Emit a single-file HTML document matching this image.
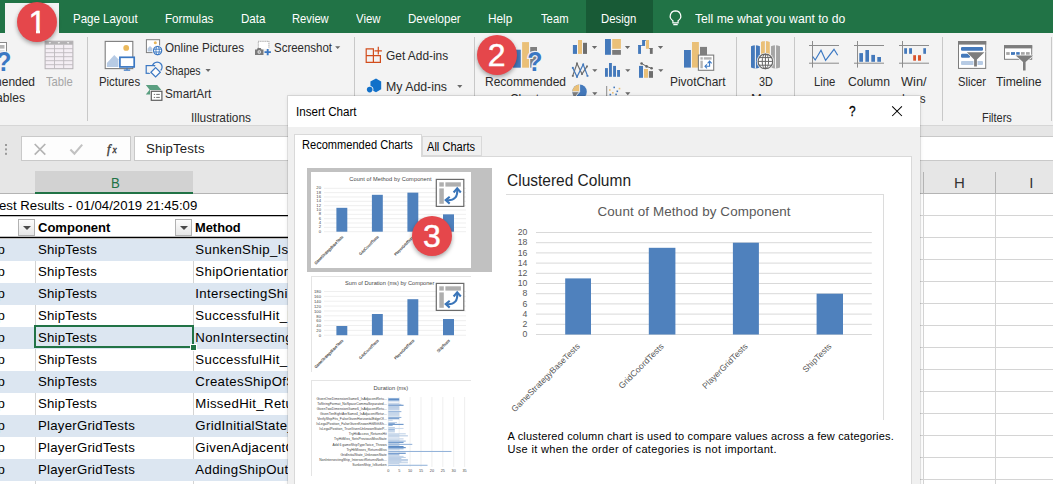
<!DOCTYPE html>
<html lang="en"><head><meta charset="utf-8"><title>Insert Chart - Recommended Charts</title>
<style>
html,body{margin:0;padding:0}
body{width:1053px;height:484px;overflow:hidden;position:relative;background:#fff;font-family:"Liberation Sans",sans-serif}
.t{position:absolute;white-space:nowrap;line-height:1}
.a{position:absolute}
.sep{position:absolute;top:37px;width:1px;height:84px;background:#c8c8c8}
.fbtn{position:absolute;top:219px;width:17px;height:17px;box-sizing:border-box;border:1px solid #b2b2b2;background:linear-gradient(#fdfdfd,#e6e6e6)}
.fbtn:after{content:"";position:absolute;left:3.6px;top:6px;border:4px solid transparent;border-top:4.2px solid #4a4a4a;border-bottom:none}
.circ{position:absolute;width:40px;height:40px;border-radius:50%;background:#e5474b;box-shadow:0 2px 4px rgba(0,0,0,.35)}
svg{position:absolute;left:0;top:0;overflow:visible}
</style></head><body>

<!-- ================= SHEET ================= -->
<div class="a" style="left:0;top:171px;width:1053px;height:22px;background:#e6e6e6"></div>
<div class="a" style="left:0;top:193px;width:1053px;height:1px;background:#b4b4b4"></div>
<div class="a" style="left:35px;top:171px;width:158px;height:21px;background:#d2d2d2"></div>
<div class="a" style="left:35px;top:192px;width:158px;height:2px;background:#217346"></div>
<div class="a" style="left:923px;top:194px;width:1px;height:290px;background:#d4d4d4"></div><div class="a" style="left:923px;top:172px;width:1px;height:21px;background:#b4b4b4"></div>
<div class="a" style="left:995px;top:194px;width:1px;height:290px;background:#d4d4d4"></div><div class="a" style="left:995px;top:172px;width:1px;height:21px;background:#b4b4b4"></div>
<div class="a" style="left:0;top:238.5px;width:300px;height:22px;background:#dce6f1"></div>
<div class="a" style="left:0;top:282.5px;width:300px;height:22px;background:#dce6f1"></div>
<div class="a" style="left:0;top:326.5px;width:300px;height:22px;background:#dce6f1"></div>
<div class="a" style="left:0;top:370.5px;width:300px;height:22px;background:#dce6f1"></div>
<div class="a" style="left:0;top:414.5px;width:300px;height:22px;background:#dce6f1"></div>
<div class="a" style="left:0;top:458.5px;width:300px;height:22px;background:#dce6f1"></div>
<div class="a" style="left:35px;top:260.5px;width:1px;height:22px;background:#d4d4d4"></div>
<div class="a" style="left:193px;top:260.5px;width:1px;height:22px;background:#d4d4d4"></div>
<div class="a" style="left:35px;top:304.5px;width:1px;height:22px;background:#d4d4d4"></div>
<div class="a" style="left:193px;top:304.5px;width:1px;height:22px;background:#d4d4d4"></div>
<div class="a" style="left:35px;top:348.5px;width:1px;height:22px;background:#d4d4d4"></div>
<div class="a" style="left:193px;top:348.5px;width:1px;height:22px;background:#d4d4d4"></div>
<div class="a" style="left:35px;top:392.5px;width:1px;height:22px;background:#d4d4d4"></div>
<div class="a" style="left:193px;top:392.5px;width:1px;height:22px;background:#d4d4d4"></div>
<div class="a" style="left:35px;top:436.5px;width:1px;height:22px;background:#d4d4d4"></div>
<div class="a" style="left:193px;top:436.5px;width:1px;height:22px;background:#d4d4d4"></div>
<div class="a" style="left:35px;top:480.5px;width:1px;height:22px;background:#d4d4d4"></div>
<div class="a" style="left:193px;top:480.5px;width:1px;height:22px;background:#d4d4d4"></div>
<div class="a" style="left:920px;top:215px;width:133px;height:1px;background:#d4d4d4"></div>
<div class="a" style="left:920px;top:237px;width:133px;height:1px;background:#d4d4d4"></div>
<div class="a" style="left:920px;top:259px;width:133px;height:1px;background:#d4d4d4"></div>
<div class="a" style="left:920px;top:281px;width:133px;height:1px;background:#d4d4d4"></div>
<div class="a" style="left:920px;top:303px;width:133px;height:1px;background:#d4d4d4"></div>
<div class="a" style="left:920px;top:325px;width:133px;height:1px;background:#d4d4d4"></div>
<div class="a" style="left:920px;top:347px;width:133px;height:1px;background:#d4d4d4"></div>
<div class="a" style="left:920px;top:369px;width:133px;height:1px;background:#d4d4d4"></div>
<div class="a" style="left:920px;top:391px;width:133px;height:1px;background:#d4d4d4"></div>
<div class="a" style="left:920px;top:413px;width:133px;height:1px;background:#d4d4d4"></div>
<div class="a" style="left:920px;top:435px;width:133px;height:1px;background:#d4d4d4"></div>
<div class="a" style="left:920px;top:457px;width:133px;height:1px;background:#d4d4d4"></div>
<div class="a" style="left:920px;top:479px;width:133px;height:1px;background:#d4d4d4"></div>
<div class="a" style="left:920px;top:501px;width:133px;height:1px;background:#d4d4d4"></div>

<svg width="1053" height="484" viewBox="0 0 1053 484"><path d="M0 215.7H300M0 237.5H300" stroke="#000" stroke-width="1.3" fill="none"/></svg>


<div class="fbtn" style="left:18px"></div>
<div class="fbtn" style="left:175px"></div>
<div class="a" style="left:34px;top:325px;width:160px;height:23px;box-sizing:border-box;border:2px solid #217346"></div>
<div class="a" style="left:190px;top:344px;width:5px;height:5px;background:#217346;border:1px solid #fff"></div>
<span class="t" style="left:110.50px;top:175.13px;font-size:15.2px;color:#217346;transform:scaleX(0.8678);transform-origin:0 0;">B</span>
<span class="t" style="left:953.98px;top:175.30px;font-size:15px;color:#333;">H</span>
<span class="t" style="left:1029.31px;top:175.30px;font-size:15px;color:#333;">I</span>
<span class="t" style="left:-1.00px;top:198.63px;font-size:13.2px;color:#000;letter-spacing:0.011px;">est Results - 01/04/2019 21:45:09</span>
<span class="t" style="left:38.20px;top:220.63px;font-size:13.2px;color:#000;font-weight:700;transform:scaleX(0.9882);transform-origin:0 0;">Component</span>
<span class="t" style="left:195.30px;top:220.63px;font-size:13.2px;color:#000;font-weight:700;transform:scaleX(0.9746);transform-origin:0 0;">Method</span>
<span class="t" style="left:-2.40px;top:242.63px;font-size:13.2px;color:#000;">p</span>
<span class="t" style="left:38.00px;top:242.63px;font-size:13.2px;color:#000;letter-spacing:0.201px;">ShipTests</span>
<span class="t" style="left:195.30px;top:242.63px;font-size:13.2px;color:#000;letter-spacing:0.35px;">SunkenShip_IsSunken</span>
<span class="t" style="left:-2.40px;top:264.63px;font-size:13.2px;color:#000;">p</span>
<span class="t" style="left:38.00px;top:264.63px;font-size:13.2px;color:#000;letter-spacing:0.201px;">ShipTests</span>
<span class="t" style="left:195.30px;top:264.63px;font-size:13.2px;color:#000;letter-spacing:0.35px;">ShipOrientation_Test</span>
<span class="t" style="left:-2.40px;top:286.63px;font-size:13.2px;color:#000;">p</span>
<span class="t" style="left:38.00px;top:286.63px;font-size:13.2px;color:#000;letter-spacing:0.201px;">ShipTests</span>
<span class="t" style="left:195.30px;top:286.63px;font-size:13.2px;color:#000;letter-spacing:0.35px;">IntersectingShips_Return</span>
<span class="t" style="left:-2.40px;top:308.63px;font-size:13.2px;color:#000;">p</span>
<span class="t" style="left:38.00px;top:308.63px;font-size:13.2px;color:#000;letter-spacing:0.201px;">ShipTests</span>
<span class="t" style="left:195.30px;top:308.63px;font-size:13.2px;color:#000;letter-spacing:0.35px;">SuccessfulHit_ReturnsHit</span>
<span class="t" style="left:-2.40px;top:330.63px;font-size:13.2px;color:#000;">p</span>
<span class="t" style="left:38.00px;top:330.63px;font-size:13.2px;color:#000;letter-spacing:0.201px;">ShipTests</span>
<span class="t" style="left:195.30px;top:330.63px;font-size:13.2px;color:#000;letter-spacing:0.35px;">NonIntersectingShip_Int</span>
<span class="t" style="left:-2.40px;top:352.63px;font-size:13.2px;color:#000;">p</span>
<span class="t" style="left:38.00px;top:352.63px;font-size:13.2px;color:#000;letter-spacing:0.201px;">ShipTests</span>
<span class="t" style="left:195.30px;top:352.63px;font-size:13.2px;color:#000;letter-spacing:0.35px;">SuccessfulHit_SinksShip</span>
<span class="t" style="left:-2.40px;top:374.63px;font-size:13.2px;color:#000;">p</span>
<span class="t" style="left:38.00px;top:374.63px;font-size:13.2px;color:#000;letter-spacing:0.201px;">ShipTests</span>
<span class="t" style="left:195.30px;top:374.63px;font-size:13.2px;color:#000;letter-spacing:0.35px;">CreatesShipOfSize_Test</span>
<span class="t" style="left:-2.40px;top:396.63px;font-size:13.2px;color:#000;">p</span>
<span class="t" style="left:38.00px;top:396.63px;font-size:13.2px;color:#000;letter-spacing:0.201px;">ShipTests</span>
<span class="t" style="left:195.30px;top:396.63px;font-size:13.2px;color:#000;letter-spacing:0.35px;">MissedHit_ReturnsMiss</span>
<span class="t" style="left:-2.40px;top:418.63px;font-size:13.2px;color:#000;">p</span>
<span class="t" style="left:38.00px;top:418.63px;font-size:13.2px;color:#000;letter-spacing:0.261px;">PlayerGridTests</span>
<span class="t" style="left:195.30px;top:418.63px;font-size:13.2px;color:#000;letter-spacing:0.35px;">GridInitialState_Unknown</span>
<span class="t" style="left:-2.40px;top:440.63px;font-size:13.2px;color:#000;">p</span>
<span class="t" style="left:38.00px;top:440.63px;font-size:13.2px;color:#000;letter-spacing:0.261px;">PlayerGridTests</span>
<span class="t" style="left:195.30px;top:440.63px;font-size:13.2px;color:#000;letter-spacing:0.35px;">GivenAdjacentCells_Is</span>
<span class="t" style="left:-2.40px;top:462.63px;font-size:13.2px;color:#000;">p</span>
<span class="t" style="left:38.00px;top:462.63px;font-size:13.2px;color:#000;letter-spacing:0.261px;">PlayerGridTests</span>
<span class="t" style="left:195.30px;top:462.63px;font-size:13.2px;color:#000;letter-spacing:0.35px;">AddingShipOutOfBounds</span>

<!-- ================= FORMULA BAR ================= -->
<div class="a" style="left:0;top:125px;width:1053px;height:46px;background:#e6e6e6"></div>
<div class="a" style="left:5px;top:144px;width:2px;height:2px;background:#9a9a9a;box-shadow:0 4.4px 0 #9a9a9a,0 8.8px 0 #9a9a9a"></div>
<div class="a" style="left:21px;top:136px;width:110px;height:25px;box-sizing:border-box;background:#fdfdfd;border:1px solid #c9c9c9"></div>
<div class="a" style="left:134px;top:136px;width:930px;height:25px;box-sizing:border-box;background:#fff;border:1px solid #c9c9c9"></div>
<svg width="1053" height="484" viewBox="0 0 1053 484">
 <path d="M34.7 144 l10.6 10.6 M45.3 144 l-10.6 10.6" stroke="#b4b4b4" stroke-width="1.7" fill="none"/>
 <path d="M70.4 149.6 l4 4 l7.8 -9" stroke="#c2c2c2" stroke-width="2.1" fill="none"/>
</svg>
<span class="t" style="left:107px;top:142.6px;font-family:'Liberation Serif',serif;font-style:italic;font-size:12.5px;color:#3c3c3c;-webkit-text-stroke:0.4px #3c3c3c">f</span><span class="t" style="left:112.6px;top:146.3px;font-family:'Liberation Serif',serif;font-style:italic;font-size:9.5px;color:#3c3c3c;-webkit-text-stroke:0.35px #3c3c3c">x</span>
<span class="t" style="left:146.00px;top:142.43px;font-size:13.2px;color:#222;letter-spacing:0.168px;">ShipTests</span>

<!-- ================= RIBBON ================= -->
<div class="a" style="left:0;top:33px;width:1053px;height:92px;background:#f3f3f3"></div>
<div class="a" style="left:0;top:124.5px;width:1053px;height:1px;background:#d6d6d6"></div>
<div class="sep" style="left:87px"></div><div class="sep" style="left:354px"></div><div class="sep" style="left:474px"></div>
<div class="sep" style="left:736px"></div><div class="sep" style="left:794px"></div><div class="sep" style="left:942px"></div><div class="sep" style="left:1051px"></div>
<svg width="1053" height="484" viewBox="0 0 1053 484" font-family="Liberation Sans, sans-serif">
<defs>
 <clipPath id="ribclip"><rect x="0" y="33" width="1053" height="92"/></clipPath>
</defs>
<g clip-path="url(#ribclip)">
<!-- Recommended PivotTables (left, mostly cut) -->
<rect x="-8" y="42.5" width="14.5" height="13" fill="#fff" stroke="#8a8a8a" stroke-width="1"/>
<rect x="-6" y="45" width="10.5" height="3.6" fill="#b5b5b5"/>
<rect x="-6" y="50.5" width="10.5" height="1" fill="#c8c8c8"/><rect x="-6" y="53.5" width="10.5" height="1" fill="#c8c8c8"/>
<text x="-3.8" y="70.9" font-size="27" font-weight="700" fill="#3b78c3" stroke="#f3f3f3" stroke-width="2.2" paint-order="stroke" textLength="15.2" lengthAdjust="spacingAndGlyphs">?</text>
<!-- Table (disabled) -->
<g>
 <rect x="45.1" y="41.2" width="27.8" height="27.5" fill="#f4eef4" stroke="#b4b1b4" stroke-width="1"/>
 <rect x="45.1" y="41.2" width="27.8" height="3.5" fill="#b3b1b3"/>
 <path d="M45.1 48.7h27.8M45.1 52.7h27.8M45.1 56.7h27.8M45.1 60.7h27.8M45.1 64.7h27.8M54.5 44.7v24M63.7 44.7v24" stroke="#bdb9bd" stroke-width="0.9" fill="none"/>
 <path d="M48.6 42.2h2.6l-1.3 1.6zM57.6 42.2h2.6l-1.3 1.6zM66.8 42.2h2.6l-1.3 1.6z" fill="#fff"/>
</g>
<!-- Pictures -->
<g>
 <rect x="105.2" y="41.4" width="27.6" height="27.2" fill="#fff" stroke="#7d7d7d" stroke-width="1.1"/>
 <circle cx="126.2" cy="47.9" r="2.9" fill="#eab85b"/>
 <path d="M106.9 66.9 L106.9 63 L114.3 55 L118.4 59.2 L118.4 66.9 Z" fill="#b7cbe4"/>
 <rect x="119.9" y="57.3" width="14.3" height="9.6" fill="#fff" stroke="#3b78c3" stroke-width="1.7"/>
 <path d="M127 67.7v2 M123.8 70.1h6.4" stroke="#3b78c3" stroke-width="1.1" fill="none"/>
</g>
<!-- Online Pictures -->
<g>
 <rect x="146.4" y="39.7" width="13.2" height="12.9" fill="#fff" stroke="#7d7d7d" stroke-width="1"/>
 <circle cx="155.3" cy="42.8" r="1.5" fill="#eab85b"/>
 <path d="M147.6 51.4 L147.6 48.6 L150 46 L152.6 48.6 L152.6 51.4 Z" fill="#b7cbe4"/>
 <circle cx="157.6" cy="50.6" r="4.3" fill="#fff" stroke="#f3f3f3" stroke-width="2.4"/>
 <circle cx="157.6" cy="50.6" r="4.1" fill="#fff" stroke="#3b78c3" stroke-width="1.2"/>
 <ellipse cx="157.6" cy="50.6" rx="1.7" ry="4.1" fill="none" stroke="#3b78c3" stroke-width="0.9"/>
 <path d="M153.9 49.2h7.4M153.9 52h7.4" stroke="#3b78c3" stroke-width="0.9" fill="none"/>
</g>
<!-- Shapes -->
<g fill="none" stroke="#3b78c3" stroke-width="1.2">
 <circle cx="157.2" cy="67" r="4.9"/>
 <rect x="146.2" y="65.6" width="8.6" height="7.7" fill="#f3f3f3"/>
 <path d="M155.6 67.6 L160.3 72.2 L155.6 76.9 L150.9 72.2 Z" fill="#fdfdfd" stroke="#f3f3f3" stroke-width="3"/>
 <path d="M155.6 67.6 L160.3 72.2 L155.6 76.9 L150.9 72.2 Z" fill="#fdfdfd"/>
</g>
<path d="M205.5 69.1h5.2l-2.6 2.9z" fill="#6a6a6a"/>
<!-- SmartArt -->
<g>
 <path d="M145.8 85.1 H157.2 L161.2 89.8 L157.2 94.6 H145.8 L149.6 89.8 Z" fill="#5a9e80"/>
 <rect x="151.3" y="91.3" width="10.6" height="9" fill="#fff" stroke="#f3f3f3" stroke-width="2.6"/>
 <rect x="151.3" y="91.3" width="10.6" height="9" fill="#fff" stroke="#5f5f5f" stroke-width="1.2"/>
 <path d="M153.8 94.4h1.3M156.2 94.4h3.6M153.8 97.4h1.3M156.2 97.4h3.6" stroke="#6f6f6f" stroke-width="1" fill="none"/>
</g>
<!-- Screenshot -->
<g>
 <rect x="258.3" y="41.3" width="10.6" height="7.4" fill="#fff"/><path d="M258.3 47.6 V41.3 H268.9 V48" fill="none" stroke="#8a8a8a" stroke-width="1" stroke-dasharray="1 1.1"/>
 <path d="M255 49.4 h1.8 l0.9 -1.4 h3 l0.9 1.4 h1.9 v5.6 h-8.5 z" fill="#7a7a7a"/>
 <circle cx="259.2" cy="52" r="1.7" fill="#f3f3f3"/><circle cx="259.2" cy="52" r="0.8" fill="#7a7a7a"/>
 <path d="M267.7 48.9v6.4M264.5 52.1h6.4" stroke="#3b78c3" stroke-width="1.9" fill="none"/>
</g>
<path d="M335.1 46.2h5.2l-2.6 2.9z" fill="#6a6a6a"/>
<!-- Get Add-ins -->
<g fill="none" stroke="#d24d1c" stroke-width="1.2">
 <path d="M366.2 48.8 H373.4 V62.4 H366.2 Z M366.2 55.6 H380.4 V62.4 H373.4"/>
 <path d="M378.3 46.8v7.6M374.5 50.9h7.4"/>
</g>
<!-- My Add-ins -->
<g>
 <path d="M376 78.6 L381.2 81.6 L381.2 89.2 L376 92.3 L370.6 89.4 L370.4 81.6 Z" fill="#1170c9"/>
 <circle cx="369.7" cy="89.6" r="3.7" fill="#f3f3f3"/>
 <circle cx="369.7" cy="89.6" r="2.8" fill="#1170c9"/>
</g>
<path d="M457.2 85.1h5.2l-2.6 2.9z" fill="#6a6a6a"/>
<!-- Recommended Charts -->
<g>
 <rect x="513" y="49.7" width="7.8" height="18" fill="#4479bb"/>
 <rect x="522.1" y="42.1" width="6.9" height="25.6" fill="#eac078"/>
 <rect x="530.2" y="47" width="6.8" height="20.7" fill="#7f7f7f"/>
 <text x="527.3" y="70.9" font-size="27" font-weight="700" fill="#3b78c3" stroke="#f3f3f3" stroke-width="2.4" paint-order="stroke" textLength="15.2" lengthAdjust="spacingAndGlyphs">?</text>
</g>
<!-- chart gallery row 1 -->
<g>
 <rect x="572.9" y="45" width="4.1" height="8.9" fill="#4479bb"/><rect x="578" y="40" width="4" height="13.9" fill="#eac078"/><rect x="583" y="42.8" width="4" height="11.1" fill="#6e6e6e"/>
 <rect x="605" y="39" width="5.9" height="15.8" fill="#4479bb"/><rect x="612.2" y="39" width="8.7" height="9.8" fill="#eac078"/><rect x="612.2" y="50" width="8.7" height="4.8" fill="#7a7a7a"/>
 <rect x="638.1" y="45" width="2.9" height="8.9" fill="#4479bb"/><rect x="638.1" y="45" width="6.9" height="0.8" fill="#4479bb"/>
 <rect x="642.1" y="40" width="2.9" height="5.7" fill="#4479bb"/><rect x="645" y="40" width="1" height="0.8" fill="#4479bb"/>
 <rect x="645.9" y="40" width="3.1" height="8.8" fill="#eac078"/>
 <rect x="649" y="48.1" width="3.7" height="0.8" fill="#6e6e6e"/><rect x="649.9" y="48.1" width="2.8" height="5.8" fill="#6e6e6e"/>
</g>
<!-- row 2 -->
<g fill="none" stroke-width="1.2">
 <path d="M572.7 75.9 L577 63.5 L582 74 L587 66.4" stroke="#6e6e6e"/>
 <path d="M572.7 67.8 L577 76.8 L583.2 64.5 L587.5 75.9" stroke="#4479bb"/>
</g>
<g fill="#6e6e6e"><rect x="571.9" y="75" width="1.8" height="1.8"/><rect x="576.1" y="62.6" width="1.8" height="1.8"/><rect x="581.1" y="73.1" width="1.8" height="1.8"/><rect x="586.1" y="65.5" width="1.8" height="1.8"/></g>
<g fill="#4479bb"><rect x="571.9" y="66.9" width="1.8" height="1.8"/><rect x="576.1" y="75.9" width="1.8" height="1.8"/><rect x="582.3" y="63.6" width="1.8" height="1.8"/><rect x="586.6" y="75" width="1.8" height="1.8"/></g>
<g fill="#4479bb">
 <rect x="605" y="68.1" width="2.9" height="8.7"/><rect x="609" y="63" width="2.9" height="13.8"/><rect x="613.1" y="65.9" width="2.9" height="10.9"/><rect x="617.1" y="70" width="2.9" height="6.8"/>
</g>
<g>
 <rect x="639" y="65.9" width="4" height="11.9" fill="#4479bb"/><rect x="644" y="69" width="4" height="8.8" fill="#eac078"/><rect x="648.9" y="71.1" width="4.1" height="6.7" fill="#6e6e6e"/>
 <path d="M641.6 63.5 L646.6 66.4 L651.6 68.3" stroke="#666" stroke-width="1" fill="none"/>
 <circle cx="641.6" cy="63.5" r="1.3" fill="#666"/><circle cx="646.6" cy="66.4" r="1.3" fill="#666"/><circle cx="651.6" cy="68.3" r="1.3" fill="#666"/>
</g>
<!-- row 3 : pie & scatter -->
<g>
 <circle cx="579.6" cy="91.7" r="7.2" fill="#4479bb"/>
 <path d="M579.6 91.7 V84.5 A7.2 7.2 0 0 0 572.4 91.7 Z" fill="#eac078"/>
 <path d="M579.6 91.7 H572.4 A7.2 7.2 0 0 0 575 97.2 Z" fill="#7f7f7f"/>
 <path d="M579.6 84.2V91.7H572.2M579.6 91.7L574.8 97.5" stroke="#f3f3f3" stroke-width="0.9" fill="none"/>
 <path d="M606.7 86v14" stroke="#8a8a8a" stroke-width="1"/>
 <rect x="609" y="89.2" width="1.6" height="1.6" fill="#eac078"/><rect x="613.4" y="86.6" width="1.6" height="1.6" fill="#4479bb"/><rect x="612" y="92" width="1.6" height="1.6" fill="#eac078"/>
 <rect x="616.5" y="90.5" width="1.6" height="1.6" fill="#4479bb"/><rect x="618.7" y="87.8" width="1.6" height="1.6" fill="#eac078"/><rect x="609.5" y="93.8" width="1.6" height="1.6" fill="#4479bb"/><rect x="615.3" y="93.6" width="1.6" height="1.6" fill="#4479bb"/>
</g>
<g fill="#6a6a6a">
 <path d="M591.9 46h5.2l-2.6 2.9z"/><path d="M624.9 46h5.2l-2.6 2.9z"/><path d="M657.9 46h5.2l-2.6 2.9z"/>
 <path d="M592.2 69.2h5.2l-2.6 2.9z"/><path d="M625.2 69.2h5.2l-2.6 2.9z"/><path d="M658.2 69.2h5.2l-2.6 2.9z"/>
 <path d="M592.2 92.3h5.2l-2.6 2.9z"/><path d="M625.2 92.3h5.2l-2.6 2.9z"/>
</g>
<!-- PivotChart -->
<g>
 <rect x="684" y="50" width="6.9" height="17.6" fill="#4479bb"/><rect x="692" y="42" width="6.9" height="25.6" fill="#eac078"/><rect x="700" y="46.9" width="7" height="12" fill="#7f7f7f"/>
 <rect x="698.4" y="55.1" width="15.3" height="15.2" fill="#fff" stroke="#7d7d7d" stroke-width="1.1"/>
 <rect x="700.4" y="57.2" width="2.4" height="2.4" fill="#b3b3b3"/><rect x="703.8" y="57.2" width="7.8" height="2.4" fill="#b3b3b3"/><rect x="700.4" y="60.7" width="2.4" height="7.6" fill="#b3b3b3"/>
 <path d="M705.2 66.3 H709.6 V61.5" fill="none" stroke="#3b78c3" stroke-width="1.1"/>
 <path d="M707.6 63.3 L709.6 61.1 L711.6 63.3 M707 64.3 L705 66.3 L707 68.3" fill="none" stroke="#3b78c3" stroke-width="1.1"/>
</g>
<!-- 3D Map -->
<g>
 <path d="M751 46.3 Q755.4 44.2 759.9 46.3 V67.5 Q755.4 69.4 751 67.5 Z" fill="#4479bb"/>
 <path d="M755.4 45 V68.6" stroke="#f3f3f3" stroke-width="1.1"/>
 <path d="M761 42 Q765.4 40 769.8 42 V60 H761 Z" fill="#eac078"/>
 <path d="M765.4 40.8 V58" stroke="#f3f3f3" stroke-width="1.1"/>
 <path d="M771 46.3 Q775.5 44.2 780 46.3 V67.5 Q775.5 69.4 771 67.5 Z" fill="#a6a6a6"/>
 <path d="M775.5 45 V68.6" stroke="#f3f3f3" stroke-width="1.1"/>
 <circle cx="765.4" cy="61.4" r="8.6" fill="#f3f3f3"/>
 <circle cx="765.4" cy="61.4" r="7.3" fill="#fff" stroke="#666" stroke-width="1.2"/>
 <ellipse cx="765.4" cy="61.4" rx="3.2" ry="7.3" fill="none" stroke="#666" stroke-width="1"/>
 <path d="M765.4 54.1V68.7M758.1 61.4H772.7M759.2 57.6H771.6M759.2 65.2H771.6" stroke="#666" stroke-width="1" fill="none"/>
</g>
<!-- Sparklines -->
<g fill="none" stroke="#8c8c8c" stroke-width="1">
 <path d="M812.5 41v26.6M809 45.5h30M809 63.2h30"/>
 <path d="M857.5 41v26.6M854 45.5h30M854 63.2h30"/>
 <path d="M902.5 41v26.6M899 45.5h30M899 63.2h30"/>
</g>
<path d="M812.7 56.5 L815.2 60 L821 50.3 L825.6 60.4 L834 49.3 L837.7 55.2" fill="none" stroke="#3b78c3" stroke-width="1.2"/>
<g fill="#4479bb">
 <rect x="859.3" y="53.1" width="3.7" height="8.7"/><rect x="865.4" y="50" width="3.6" height="11.8"/><rect x="871.3" y="54.9" width="3.7" height="6.9"/><rect x="877.3" y="57" width="3.7" height="4.8"/>
 <rect x="904.2" y="48.2" width="2.8" height="5.6"/><rect x="909.1" y="48.2" width="2.9" height="5.6"/><rect x="923.3" y="48.2" width="2.7" height="5.6"/>
</g>
<rect x="913.2" y="55.2" width="2.8" height="5.5" fill="#d9532c"/><rect x="918" y="55.2" width="3" height="5.5" fill="#d9532c"/>
<!-- Slicer -->
<g>
 <rect x="958.5" y="41.5" width="27.2" height="26.9" fill="#fff" stroke="#7d7d7d" stroke-width="1"/>
 <rect x="958" y="41" width="28.2" height="3.6" fill="#7d7d7d"/>
 <rect x="961" y="46.9" width="22" height="3.8" rx="1.2" fill="#4479bb"/>
 <rect x="961" y="53.8" width="9" height="3.9" rx="1.2" fill="#4479bb"/>
 <rect x="961" y="61.1" width="22" height="3.8" rx="1" fill="#b7cbe4"/>
 <path d="M966.8 52.2 H984.4 L976.9 59.4 V66.4 H974.1 V59.4 Z" fill="#7d7d7d" stroke="#fff" stroke-width="1.3" paint-order="stroke"/>
</g>
<!-- Timeline -->
<g>
 <rect x="1004.5" y="45.7" width="27.2" height="13.6" fill="#fff" stroke="#7d7d7d" stroke-width="1"/>
 <rect x="1004" y="45.2" width="28.2" height="3.2" fill="#7d7d7d"/>
 <rect x="1006.2" y="52.1" width="3.5" height="2.8" fill="#a6a6a6"/><rect x="1011" y="52.1" width="4" height="2.8" fill="#4479bb"/><rect x="1016.2" y="52.1" width="3.5" height="2.8" fill="#4479bb"/>
 <rect x="1021" y="52.1" width="3.7" height="2.8" fill="#a6a6a6"/><rect x="1026" y="52.1" width="3.7" height="2.8" fill="#a6a6a6"/>
 <path d="M1015.7 55.5 H1033.2 L1025.6 62 V70.4 H1023 V62 Z" fill="#7d7d7d" stroke="#f8f8f8" stroke-width="1.3" paint-order="stroke"/>
</g>
</g>
</svg>

<span class="t" style="left:-46.40px;top:75.00px;font-size:13px;color:#2b2b2b;transform:scaleX(0.9188);transform-origin:0 0;">Recommended</span>
<span class="t" style="left:-37.00px;top:91.00px;font-size:13px;color:#2b2b2b;transform:scaleX(0.9325);transform-origin:0 0;">PivotTables</span>
<span class="t" style="left:45.90px;top:75.00px;font-size:13px;color:#a6a6a6;transform:scaleX(0.8623);transform-origin:0 0;">Table</span>
<span class="t" style="left:98.50px;top:75.00px;font-size:13px;color:#2b2b2b;transform:scaleX(0.8750);transform-origin:0 0;">Pictures</span>
<span class="t" style="left:165.40px;top:41.30px;font-size:13px;color:#2b2b2b;transform:scaleX(0.8961);transform-origin:0 0;">Online Pictures</span>
<span class="t" style="left:165.40px;top:63.60px;font-size:13px;color:#2b2b2b;transform:scaleX(0.8074);transform-origin:0 0;">Shapes</span>
<span class="t" style="left:165.40px;top:86.90px;font-size:13px;color:#2b2b2b;transform:scaleX(0.9045);transform-origin:0 0;">SmartArt</span>
<span class="t" style="left:190.50px;top:110.50px;font-size:13px;color:#2b2b2b;transform:scaleX(0.9125);transform-origin:0 0;">Illustrations</span>
<span class="t" style="left:274.00px;top:41.30px;font-size:13px;color:#2b2b2b;transform:scaleX(0.8819);transform-origin:0 0;">Screenshot</span>
<span class="t" style="left:385.50px;top:49.30px;font-size:13px;color:#2b2b2b;transform:scaleX(0.9155);transform-origin:0 0;">Get Add-ins</span>
<span class="t" style="left:385.50px;top:79.90px;font-size:13px;color:#2b2b2b;transform:scaleX(0.9485);transform-origin:0 0;">My Add-ins</span>
<span class="t" style="left:485.00px;top:75.00px;font-size:13px;color:#2b2b2b;transform:scaleX(0.9188);transform-origin:0 0;">Recommended</span>
<span class="t" style="left:509.50px;top:91.90px;font-size:13px;color:#2b2b2b;transform:scaleX(0.9139);transform-origin:0 0;">Charts</span>
<span class="t" style="left:670.40px;top:75.00px;font-size:13px;color:#2b2b2b;transform:scaleX(0.9159);transform-origin:0 0;">PivotChart</span>
<span class="t" style="left:758.60px;top:75.00px;font-size:13px;color:#2b2b2b;transform:scaleX(0.8301);transform-origin:0 0;">3D</span>
<span class="t" style="left:750.95px;top:91.90px;font-size:13px;color:#2b2b2b;letter-spacing:1.068px;">Map</span>
<span class="t" style="left:813.60px;top:75.00px;font-size:13px;color:#2b2b2b;transform:scaleX(0.8707);transform-origin:0 0;">Line</span>
<span class="t" style="left:847.60px;top:75.00px;font-size:13px;color:#2b2b2b;transform:scaleX(0.9353);transform-origin:0 0;">Column</span>
<span class="t" style="left:901.00px;top:75.00px;font-size:13px;color:#2b2b2b;transform:scaleX(0.9846);transform-origin:0 0;">Win/</span>
<span class="t" style="left:902.05px;top:91.90px;font-size:13px;color:#2b2b2b;transform:scaleX(0.8555);transform-origin:0 0;">Loss</span>
<span class="t" style="left:957.90px;top:75.00px;font-size:13px;color:#2b2b2b;transform:scaleX(0.8580);transform-origin:0 0;">Slicer</span>
<span class="t" style="left:995.50px;top:75.00px;font-size:13px;color:#2b2b2b;transform:scaleX(0.9351);transform-origin:0 0;">Timeline</span>
<span class="t" style="left:981.60px;top:110.50px;font-size:13px;color:#2b2b2b;transform:scaleX(0.8420);transform-origin:0 0;">Filters</span>

<!-- ================= TAB BAR ================= -->
<div class="a" style="left:0;top:0;width:1053px;height:33px;background:#217346"></div>
<div class="a" style="left:5px;top:3px;width:54px;height:30px;background:#f3f3f3"></div>
<div class="a" style="left:586px;top:0;width:67px;height:33px;background:#185a36"></div>
<svg width="1053" height="484" viewBox="0 0 1053 484">
 <path d="M675.5 10.8 a5.3 5.3 0 0 1 2.6 9.9 v2.1 h-5.2 v-2.1 a5.3 5.3 0 0 1 2.6 -9.9 z M673.3 24.6 h4.4" stroke="#fff" stroke-width="1.2" fill="none"/>
</svg>
<span class="t" style="left:73.20px;top:11.50px;font-size:13px;color:#ffffff;transform:scaleX(0.8847);transform-origin:0 0;">Page Layout</span>
<span class="t" style="left:165.40px;top:11.50px;font-size:13px;color:#ffffff;transform:scaleX(0.8932);transform-origin:0 0;">Formulas</span>
<span class="t" style="left:241.00px;top:11.50px;font-size:13px;color:#ffffff;transform:scaleX(0.8919);transform-origin:0 0;">Data</span>
<span class="t" style="left:292.00px;top:11.50px;font-size:13px;color:#ffffff;transform:scaleX(0.8610);transform-origin:0 0;">Review</span>
<span class="t" style="left:356.00px;top:11.50px;font-size:13px;color:#ffffff;transform:scaleX(0.8765);transform-origin:0 0;">View</span>
<span class="t" style="left:408.00px;top:11.50px;font-size:13px;color:#ffffff;transform:scaleX(0.8892);transform-origin:0 0;">Developer</span>
<span class="t" style="left:488.30px;top:11.50px;font-size:13px;color:#ffffff;transform:scaleX(0.9084);transform-origin:0 0;">Help</span>
<span class="t" style="left:540.50px;top:11.50px;font-size:13px;color:#ffffff;transform:scaleX(0.8649);transform-origin:0 0;">Team</span>
<span class="t" style="left:601.00px;top:11.50px;font-size:13px;color:#ffffff;transform:scaleX(0.8723);transform-origin:0 0;">Design</span>
<span class="t" style="left:695.40px;top:11.50px;font-size:13px;color:#ffffff;transform:scaleX(0.9369);transform-origin:0 0;">Tell me what you want to do</span>

<!-- ================= DIALOG ================= -->
<div class="a" style="left:288px;top:96.3px;width:632px;height:400px;background:#f0f0f0;box-shadow:0 0 0 1px rgba(0,0,0,.09),0 0 4px rgba(0,0,0,.10)"></div>
<div class="a" style="left:288px;top:96.3px;width:632px;height:30.4px;background:#fff"></div>
<div class="a" style="left:294px;top:155.5px;width:617.5px;height:340px;box-sizing:border-box;background:#fff;border:1px solid #d9d9d9"></div>
<div class="a" style="left:421.5px;top:136.4px;width:60.7px;height:19.6px;box-sizing:border-box;background:#f0f0f0;border:1px solid #d9d9d9"></div>
<div class="a" style="left:294px;top:134.3px;width:127.8px;height:22.5px;box-sizing:border-box;background:#fff;border:1px solid #d9d9d9;border-bottom:none"></div>
<div class="a" style="left:307px;top:168.3px;width:185px;height:103.5px;background:#c1c1c1"></div>
<div class="a" style="left:311px;top:172px;width:160px;height:96px;background:#fff"></div>
<div class="a" style="left:311px;top:276px;width:160px;height:96px;box-sizing:border-box;background:#fff;border-left:1px solid #e4e4e4;border-top:1px solid #e4e4e4"></div>
<div class="a" style="left:311px;top:380px;width:160px;height:96px;box-sizing:border-box;background:#fff;border-left:1px solid #e4e4e4;border-top:1px solid #e4e4e4"></div>
<div class="a" style="left:506px;top:194px;width:377px;height:1px;background:#dcdcdc"></div>
<div class="a" style="left:883px;top:194px;width:1px;height:226px;background:#dcdcdc"></div>
<svg width="1053" height="484" viewBox="0 0 1053 484" font-family="Liberation Sans, sans-serif">
<line x1="536" x2="871.8" y1="232.50" y2="232.50" stroke="#d9d9d9" stroke-width="1"/>
<line x1="536" x2="871.8" y1="242.70" y2="242.70" stroke="#d9d9d9" stroke-width="1"/>
<line x1="536" x2="871.8" y1="252.90" y2="252.90" stroke="#d9d9d9" stroke-width="1"/>
<line x1="536" x2="871.8" y1="263.10" y2="263.10" stroke="#d9d9d9" stroke-width="1"/>
<line x1="536" x2="871.8" y1="273.30" y2="273.30" stroke="#d9d9d9" stroke-width="1"/>
<line x1="536" x2="871.8" y1="283.50" y2="283.50" stroke="#d9d9d9" stroke-width="1"/>
<line x1="536" x2="871.8" y1="293.70" y2="293.70" stroke="#d9d9d9" stroke-width="1"/>
<line x1="536" x2="871.8" y1="303.90" y2="303.90" stroke="#d9d9d9" stroke-width="1"/>
<line x1="536" x2="871.8" y1="314.10" y2="314.10" stroke="#d9d9d9" stroke-width="1"/>
<line x1="536" x2="871.8" y1="324.30" y2="324.30" stroke="#d9d9d9" stroke-width="1"/>
<line x1="536" x2="871.8" y1="334.50" y2="334.50" stroke="#d9d9d9" stroke-width="1"/>
<rect x="565.2" y="278.40" width="25.80" height="56.10" fill="#4f81bd"/>
<text x="487.6" y="346.9" font-size="8.5" fill="#595959" textLength="92.8" lengthAdjust="spacingAndGlyphs" transform="rotate(-45 580.4 346.9)">GameStrategyBaseTests</text>
<rect x="648.8" y="247.80" width="26.60" height="86.70" fill="#4f81bd"/>
<text x="604.4" y="346.9" font-size="8.5" fill="#595959" textLength="60" lengthAdjust="spacingAndGlyphs" transform="rotate(-45 664.4 346.9)">GridCoordTests</text>
<rect x="732.9" y="242.70" width="26.00" height="91.80" fill="#4f81bd"/>
<text x="688.0" y="346.9" font-size="8.5" fill="#595959" textLength="60.2" lengthAdjust="spacingAndGlyphs" transform="rotate(-45 748.2 346.9)">PlayerGridTests</text>
<rect x="816.6" y="293.70" width="26.40" height="40.80" fill="#4f81bd"/>
<text x="795.1" y="346.9" font-size="8.5" fill="#595959" textLength="37" lengthAdjust="spacingAndGlyphs" transform="rotate(-45 832.1 346.9)">ShipTests</text>
<line x1="324" x2="466" y1="188.30" y2="188.30" stroke="#dedede" stroke-width="0.5"/>
<line x1="324" x2="466" y1="192.64" y2="192.64" stroke="#dedede" stroke-width="0.5"/>
<line x1="324" x2="466" y1="196.98" y2="196.98" stroke="#dedede" stroke-width="0.5"/>
<line x1="324" x2="466" y1="201.32" y2="201.32" stroke="#dedede" stroke-width="0.5"/>
<line x1="324" x2="466" y1="205.66" y2="205.66" stroke="#dedede" stroke-width="0.5"/>
<line x1="324" x2="466" y1="210.00" y2="210.00" stroke="#dedede" stroke-width="0.5"/>
<line x1="324" x2="466" y1="214.34" y2="214.34" stroke="#dedede" stroke-width="0.5"/>
<line x1="324" x2="466" y1="218.68" y2="218.68" stroke="#dedede" stroke-width="0.5"/>
<line x1="324" x2="466" y1="223.02" y2="223.02" stroke="#dedede" stroke-width="0.5"/>
<line x1="324" x2="466" y1="227.36" y2="227.36" stroke="#dedede" stroke-width="0.5"/>
<line x1="324" x2="466" y1="231.70" y2="231.70" stroke="#dedede" stroke-width="0.5"/>
<rect x="336.4" y="207.83" width="10.90" height="23.87" fill="#4f81bd"/>
<text x="304.5" y="237.2" font-size="3.8" fill="#444" stroke="#444" stroke-width="0.12" textLength="39" lengthAdjust="spacingAndGlyphs" transform="rotate(-45 343.5 237.2)">GameStrategyBaseTests</text>
<rect x="371.9" y="194.81" width="10.90" height="36.89" fill="#4f81bd"/>
<text x="353.0" y="237.2" font-size="3.8" fill="#444" stroke="#444" stroke-width="0.12" textLength="26" lengthAdjust="spacingAndGlyphs" transform="rotate(-45 379.0 237.2)">GridCoordTests</text>
<rect x="407.4" y="192.64" width="10.90" height="39.06" fill="#4f81bd"/>
<text x="388.0" y="237.2" font-size="3.8" fill="#444" stroke="#444" stroke-width="0.12" textLength="26.5" lengthAdjust="spacingAndGlyphs" transform="rotate(-45 414.5 237.2)">PlayerGridTests</text>
<rect x="443" y="214.34" width="11.00" height="17.36" fill="#4f81bd"/>
<text x="433.6" y="237.2" font-size="3.8" fill="#444" stroke="#444" stroke-width="0.12" textLength="16.5" lengthAdjust="spacingAndGlyphs" transform="rotate(-45 450.1 237.2)">ShipTests</text>
<line x1="324" x2="466" y1="291.50" y2="291.50" stroke="#dedede" stroke-width="0.5"/>
<line x1="324" x2="466" y1="296.36" y2="296.36" stroke="#dedede" stroke-width="0.5"/>
<line x1="324" x2="466" y1="301.22" y2="301.22" stroke="#dedede" stroke-width="0.5"/>
<line x1="324" x2="466" y1="306.08" y2="306.08" stroke="#dedede" stroke-width="0.5"/>
<line x1="324" x2="466" y1="310.94" y2="310.94" stroke="#dedede" stroke-width="0.5"/>
<line x1="324" x2="466" y1="315.80" y2="315.80" stroke="#dedede" stroke-width="0.5"/>
<line x1="324" x2="466" y1="320.66" y2="320.66" stroke="#dedede" stroke-width="0.5"/>
<line x1="324" x2="466" y1="325.52" y2="325.52" stroke="#dedede" stroke-width="0.5"/>
<line x1="324" x2="466" y1="330.38" y2="330.38" stroke="#dedede" stroke-width="0.5"/>
<line x1="324" x2="466" y1="335.24" y2="335.24" stroke="#dedede" stroke-width="0.5"/>
<rect x="336.4" y="326.00" width="10.90" height="9.20" fill="#4f81bd"/>
<text x="304.5" y="341" font-size="3.8" fill="#444" stroke="#444" stroke-width="0.12" textLength="39" lengthAdjust="spacingAndGlyphs" transform="rotate(-45 343.5 341)">GameStrategyBaseTests</text>
<rect x="371.9" y="314.00" width="10.90" height="21.20" fill="#4f81bd"/>
<text x="353.0" y="341" font-size="3.8" fill="#444" stroke="#444" stroke-width="0.12" textLength="26" lengthAdjust="spacingAndGlyphs" transform="rotate(-45 379.0 341)">GridCoordTests</text>
<rect x="407.4" y="299.20" width="10.90" height="36.00" fill="#4f81bd"/>
<text x="388.0" y="341" font-size="3.8" fill="#444" stroke="#444" stroke-width="0.12" textLength="26.5" lengthAdjust="spacingAndGlyphs" transform="rotate(-45 414.5 341)">PlayerGridTests</text>
<rect x="443" y="319.00" width="11.00" height="16.20" fill="#4f81bd"/>
<text x="433.6" y="341" font-size="3.8" fill="#444" stroke="#444" stroke-width="0.12" textLength="16.5" lengthAdjust="spacingAndGlyphs" transform="rotate(-45 450.1 341)">ShipTests</text>
<line x1="388.30" x2="388.30" y1="397" y2="467" stroke="#dedede" stroke-width="0.5"/>
<line x1="399.20" x2="399.20" y1="397" y2="467" stroke="#dedede" stroke-width="0.5"/>
<line x1="410.10" x2="410.10" y1="397" y2="467" stroke="#dedede" stroke-width="0.5"/>
<line x1="421.00" x2="421.00" y1="397" y2="467" stroke="#dedede" stroke-width="0.5"/>
<line x1="431.90" x2="431.90" y1="397" y2="467" stroke="#dedede" stroke-width="0.5"/>
<line x1="442.80" x2="442.80" y1="397" y2="467" stroke="#dedede" stroke-width="0.5"/>
<line x1="453.70" x2="453.70" y1="397" y2="467" stroke="#dedede" stroke-width="0.5"/>
<line x1="464.60" x2="464.60" y1="397" y2="467" stroke="#dedede" stroke-width="0.5"/>
<rect x="388.3" y="397.95" width="10.90" height="1.2" fill="#8fb0d8"/>
<rect x="388.3" y="399.04" width="10.90" height="1.2" fill="#5b8ac4"/>
<rect x="388.3" y="400.13" width="10.90" height="1.2" fill="#8fb0d8"/>
<rect x="388.3" y="402.77" width="10.90" height="1" fill="#bccfe6"/>
<rect x="388.3" y="403.86" width="13.08" height="1" fill="#bccfe6"/>
<rect x="388.3" y="404.77" width="15.26" height="1" fill="#5b8ac4"/>
<rect x="388.3" y="405.90" width="10.90" height="1.3" fill="#bccfe6"/>
<rect x="388.3" y="406.99" width="10.90" height="1.3" fill="#bccfe6"/>
<rect x="388.3" y="408.08" width="10.90" height="1.3" fill="#bccfe6"/>
<rect x="388.3" y="409.17" width="10.90" height="1.3" fill="#bccfe6"/>
<rect x="388.3" y="411.14" width="13.08" height="1" fill="#8fb0d8"/>
<rect x="388.3" y="412.13" width="10.90" height="1.2" fill="#bccfe6"/>
<rect x="388.3" y="413.22" width="10.90" height="1.2" fill="#bccfe6"/>
<rect x="388.3" y="414.31" width="10.90" height="1.2" fill="#bccfe6"/>
<rect x="388.3" y="415.50" width="10.90" height="1" fill="#bccfe6"/>
<rect x="388.3" y="416.95" width="13.08" height="1" fill="#8fb0d8"/>
<rect x="388.3" y="418.23" width="10.90" height="1" fill="#5b8ac4"/>
<rect x="388.3" y="419.68" width="4.36" height="1" fill="#bccfe6"/>
<rect x="388.3" y="422.05" width="8.72" height="1" fill="#bccfe6"/>
<rect x="388.3" y="422.95" width="6.54" height="1" fill="#8fb0d8"/>
<rect x="388.3" y="423.86" width="15.26" height="1" fill="#5b8ac4"/>
<rect x="388.3" y="424.95" width="4.36" height="1" fill="#8fb0d8"/>
<rect x="388.3" y="426.95" width="6.54" height="1" fill="#bccfe6"/>
<rect x="388.3" y="427.96" width="15.26" height="0.8" fill="#bccfe6"/>
<rect x="388.3" y="429.14" width="6.54" height="1" fill="#8fb0d8"/>
<rect x="388.3" y="430.13" width="6.54" height="1.2" fill="#bccfe6"/>
<rect x="388.3" y="431.22" width="6.54" height="1.2" fill="#bccfe6"/>
<rect x="388.3" y="433.32" width="17.44" height="1" fill="#bccfe6"/>
<rect x="388.3" y="434.31" width="10.90" height="1.2" fill="#bccfe6"/>
<rect x="388.3" y="435.22" width="19.62" height="1.2" fill="#bccfe6"/>
<rect x="388.3" y="436.31" width="10.90" height="1.2" fill="#bccfe6"/>
<rect x="388.3" y="438.41" width="15.26" height="1" fill="#bccfe6"/>
<rect x="388.3" y="439.50" width="10.90" height="1" fill="#bccfe6"/>
<rect x="388.3" y="440.59" width="17.44" height="1" fill="#8fb0d8"/>
<rect x="388.3" y="441.86" width="15.26" height="1" fill="#5b8ac4"/>
<rect x="388.3" y="442.95" width="10.90" height="1" fill="#bccfe6"/>
<rect x="388.3" y="443.86" width="23.98" height="1" fill="#8fb0d8"/>
<rect x="388.3" y="444.95" width="10.90" height="1" fill="#bccfe6"/>
<rect x="388.3" y="446.00" width="15.26" height="1.1" fill="#5b8ac4"/>
<rect x="388.3" y="447.09" width="17.44" height="1.1" fill="#5b8ac4"/>
<rect x="388.3" y="448.18" width="15.26" height="1.1" fill="#8fb0d8"/>
<rect x="388.3" y="449.32" width="10.90" height="1" fill="#bccfe6"/>
<rect x="388.3" y="450.95" width="63.22" height="1" fill="#8fb0d8"/>
<rect x="388.3" y="452.72" width="17.44" height="1.1" fill="#5b8ac4"/>
<rect x="388.3" y="453.86" width="10.90" height="1" fill="#8fb0d8"/>
<rect x="388.3" y="454.77" width="10.90" height="1" fill="#bccfe6"/>
<rect x="388.3" y="455.86" width="15.26" height="1" fill="#bccfe6"/>
<rect x="388.3" y="456.95" width="17.44" height="1" fill="#bccfe6"/>
<rect x="388.3" y="457.90" width="13.08" height="1.3" fill="#bccfe6"/>
<rect x="388.3" y="458.99" width="19.62" height="1.3" fill="#bccfe6"/>
<rect x="388.3" y="460.08" width="19.62" height="1.3" fill="#bccfe6"/>
<rect x="388.3" y="461.17" width="13.08" height="1.3" fill="#bccfe6"/>
<rect x="388.3" y="462.23" width="19.62" height="1" fill="#bccfe6"/>
<rect x="388.3" y="463.14" width="10.90" height="1" fill="#bccfe6"/>
<rect x="388.3" y="464.77" width="39.24" height="1" fill="#8fb0d8"/>
<g transform="translate(436.3 179.4)"><rect x="0" y="0" width="27.5" height="27" fill="#fff" stroke="#6b6b6b" stroke-width="1.2"/><rect x="3" y="2.9" width="4.5" height="4.3" fill="#afafaf"/><rect x="9.1" y="2.9" width="15.5" height="4.3" fill="#afafaf"/><rect x="3" y="9" width="4.5" height="15.4" fill="#afafaf"/><path d="M10 20.7 C18.5 21.6 21.6 17 20.9 9.6" fill="none" stroke="#3a75b9" stroke-width="2.1"/><path d="M17.3 13.1 L20.9 9 L24.5 13.1" fill="none" stroke="#3a75b9" stroke-width="2.1"/><path d="M13.4 17.4 L9.4 20.7 L13.4 24.2" fill="none" stroke="#3a75b9" stroke-width="2.1"/></g>
<g transform="translate(436.3 283.4)"><rect x="0" y="0" width="27.5" height="27" fill="#fff" stroke="#6b6b6b" stroke-width="1.2"/><rect x="3" y="2.9" width="4.5" height="4.3" fill="#afafaf"/><rect x="9.1" y="2.9" width="15.5" height="4.3" fill="#afafaf"/><rect x="3" y="9" width="4.5" height="15.4" fill="#afafaf"/><path d="M10 20.7 C18.5 21.6 21.6 17 20.9 9.6" fill="none" stroke="#3a75b9" stroke-width="2.1"/><path d="M17.3 13.1 L20.9 9 L24.5 13.1" fill="none" stroke="#3a75b9" stroke-width="2.1"/><path d="M13.4 17.4 L9.4 20.7 L13.4 24.2" fill="none" stroke="#3a75b9" stroke-width="2.1"/></g>
<path d="M892.2 106.3 l9.7 9.7 M901.9 106.3 l-9.7 9.7" stroke="#000" stroke-width="1.05" fill="none"/>
</svg>
<span class="t" style="left:296.30px;top:105.94px;font-size:12px;color:#000;transform:scaleX(0.9665);transform-origin:0 0;">Insert Chart</span>
<span class="t" style="left:849.00px;top:104.18px;font-size:14.2px;color:#000;transform:scaleX(0.8364);transform-origin:0 0;-webkit-text-stroke:0.3px #000;">?</span>
<span class="t" style="left:301.50px;top:138.94px;font-size:12px;color:#000;transform:scaleX(0.9229);transform-origin:0 0;">Recommended Charts</span>
<span class="t" style="left:427.30px;top:141.34px;font-size:12px;color:#000;transform:scaleX(0.9228);transform-origin:0 0;">All Charts</span>
<span class="t" style="left:507.40px;top:171.50px;font-size:16.3px;color:#1e1e1e;transform:scaleX(0.9516);transform-origin:0 0;">Clustered Column</span>
<span class="t" style="left:597.50px;top:205.26px;font-size:13.4px;color:#595959;letter-spacing:0.120px;">Count of Method by Component</span>
<span class="t" style="left:517.63px;top:228.24px;font-size:8.7px;color:#595959;">20</span>
<span class="t" style="left:517.63px;top:238.44px;font-size:8.7px;color:#595959;">18</span>
<span class="t" style="left:517.63px;top:248.64px;font-size:8.7px;color:#595959;">16</span>
<span class="t" style="left:517.63px;top:258.84px;font-size:8.7px;color:#595959;">14</span>
<span class="t" style="left:517.63px;top:269.04px;font-size:8.7px;color:#595959;">12</span>
<span class="t" style="left:517.63px;top:279.24px;font-size:8.7px;color:#595959;">10</span>
<span class="t" style="left:522.46px;top:289.44px;font-size:8.7px;color:#595959;">8</span>
<span class="t" style="left:522.46px;top:299.64px;font-size:8.7px;color:#595959;">6</span>
<span class="t" style="left:522.46px;top:309.84px;font-size:8.7px;color:#595959;">4</span>
<span class="t" style="left:522.46px;top:320.04px;font-size:8.7px;color:#595959;">2</span>
<span class="t" style="left:522.46px;top:330.24px;font-size:8.7px;color:#595959;">0</span>
<span class="t" style="left:507.50px;top:430.89px;font-size:11px;color:#000;letter-spacing:0.180px;">A clustered column chart is used to compare values across a few categories.</span>
<span class="t" style="left:507.50px;top:443.69px;font-size:11px;color:#000;letter-spacing:0.330px;">Use it when the order of categories is not important.</span>
<span class="t" style="left:349.30px;top:177.17px;font-size:5.7px;color:#484848;letter-spacing:0.063px;">Count of Method by Component</span>
<span class="t" style="left:316.33px;top:186.24px;font-size:4.2px;color:#484848;">20</span>
<span class="t" style="left:316.33px;top:190.58px;font-size:4.2px;color:#484848;">18</span>
<span class="t" style="left:316.33px;top:194.92px;font-size:4.2px;color:#484848;">16</span>
<span class="t" style="left:316.33px;top:199.26px;font-size:4.2px;color:#484848;">14</span>
<span class="t" style="left:316.33px;top:203.60px;font-size:4.2px;color:#484848;">12</span>
<span class="t" style="left:316.33px;top:207.94px;font-size:4.2px;color:#484848;">10</span>
<span class="t" style="left:318.66px;top:212.28px;font-size:4.2px;color:#484848;">8</span>
<span class="t" style="left:318.66px;top:216.62px;font-size:4.2px;color:#484848;">6</span>
<span class="t" style="left:318.66px;top:220.96px;font-size:4.2px;color:#484848;">4</span>
<span class="t" style="left:318.66px;top:225.30px;font-size:4.2px;color:#484848;">2</span>
<span class="t" style="left:318.66px;top:229.64px;font-size:4.2px;color:#484848;">0</span>
<span class="t" style="left:344.60px;top:281.47px;font-size:5.7px;color:#484848;transform:scaleX(0.9958);transform-origin:0 0;">Sum of Duration (ms) by Componer</span>
<span class="t" style="left:314.00px;top:290.24px;font-size:4.2px;color:#484848;">180</span>
<span class="t" style="left:314.00px;top:295.10px;font-size:4.2px;color:#484848;">160</span>
<span class="t" style="left:314.00px;top:299.96px;font-size:4.2px;color:#484848;">140</span>
<span class="t" style="left:314.00px;top:304.82px;font-size:4.2px;color:#484848;">120</span>
<span class="t" style="left:314.00px;top:309.68px;font-size:4.2px;color:#484848;">100</span>
<span class="t" style="left:316.33px;top:314.54px;font-size:4.2px;color:#484848;">80</span>
<span class="t" style="left:316.33px;top:319.40px;font-size:4.2px;color:#484848;">60</span>
<span class="t" style="left:316.33px;top:324.26px;font-size:4.2px;color:#484848;">40</span>
<span class="t" style="left:316.33px;top:329.12px;font-size:4.2px;color:#484848;">20</span>
<span class="t" style="left:318.66px;top:333.98px;font-size:4.2px;color:#484848;">0</span>
<span class="t" style="left:373.50px;top:385.67px;font-size:5.7px;color:#484848;letter-spacing:0.011px;">Duration (ms)</span>
<span class="t" style="left:316.49px;top:398.32px;font-size:3.4px;color:#404040;">GivenOneDimensionGame6_IsAdjacentRetu...</span>
<span class="t" style="left:317.24px;top:403.34px;font-size:3.4px;color:#404040;">ToStringFormat_NoSpaceCommaSeparated...</span>
<span class="t" style="left:316.68px;top:408.36px;font-size:3.4px;color:#404040;">GivenTwoDimensionGame6_IsAdjacentRetu...</span>
<span class="t" style="left:319.88px;top:413.38px;font-size:3.4px;color:#404040;">GivenTenEightAreSame4_IsAdjacentRetur...</span>
<span class="t" style="left:317.24px;top:418.40px;font-size:3.4px;color:#404040;">VerifyShipFits_FalseGivenHorizontalEdgeOf...</span>
<span class="t" style="left:316.30px;top:423.42px;font-size:3.4px;color:#404040;">IsLegalPosition_FalseGivenKnownHitWithSh...</span>
<span class="t" style="left:319.30px;top:428.44px;font-size:3.4px;color:#404040;">IsLegalPosition_TrueGivenUnknownStateP...</span>
<span class="t" style="left:348.85px;top:433.46px;font-size:3.4px;color:#404040;">TryHitAccess_ReturnsHit</span>
<span class="t" style="left:333.96px;top:438.48px;font-size:3.4px;color:#404040;">TryHitMiss_SetsPreviousMissState</span>
<span class="t" style="left:332.51px;top:443.50px;font-size:3.4px;color:#404040;">Add 6 gameShipTypeTwice_Throws</span>
<span class="t" style="left:346.40px;top:448.52px;font-size:3.4px;color:#404040;">TryHitMisses_ReturnsMiss</span>
<span class="t" style="left:340.41px;top:453.54px;font-size:3.4px;color:#404040;">GridInitialState_UnknownState</span>
<span class="t" style="left:319.30px;top:458.56px;font-size:3.4px;color:#404040;">NonIntersectingShip_IntersectReturnsNoth...</span>
<span class="t" style="left:352.29px;top:463.58px;font-size:3.4px;color:#404040;">SunkenShip_IsSunken</span>
<span class="t" style="left:387.24px;top:469.68px;font-size:3.8px;color:#484848;">0</span>
<span class="t" style="left:398.14px;top:469.68px;font-size:3.8px;color:#484848;">5</span>
<span class="t" style="left:407.98px;top:469.68px;font-size:3.8px;color:#484848;">10</span>
<span class="t" style="left:418.88px;top:469.68px;font-size:3.8px;color:#484848;">15</span>
<span class="t" style="left:429.78px;top:469.68px;font-size:3.8px;color:#484848;">20</span>
<span class="t" style="left:440.68px;top:469.68px;font-size:3.8px;color:#484848;">25</span>
<span class="t" style="left:451.58px;top:469.68px;font-size:3.8px;color:#484848;">30</span>
<span class="t" style="left:462.48px;top:469.68px;font-size:3.8px;color:#484848;">35</span>

<!-- ================= CALLOUT CIRCLES ================= -->
<div class="circ" style="left:16.9px;top:1.8px"></div>
<div class="circ" style="left:476.75px;top:34.7px"></div>
<div class="circ" style="left:412px;top:215.75px"></div>
<span class="t" style="left:28.50px;top:5.61px;font-size:32px;color:#ffffff;-webkit-text-stroke:0.45px #fff;">1</span>
<span class="t" style="left:487.70px;top:38.71px;font-size:32px;color:#ffffff;-webkit-text-stroke:0.45px #fff;">2</span>
<span class="t" style="left:423.00px;top:219.76px;font-size:32px;color:#ffffff;-webkit-text-stroke:0.45px #fff;">3</span>
<div class="a" style="left:28px;top:29.9px;width:8.1px;height:4px;background:#e5474b"></div>
<div class="a" style="left:40.1px;top:29.9px;width:7px;height:4px;background:#e5474b"></div>
</body></html>
